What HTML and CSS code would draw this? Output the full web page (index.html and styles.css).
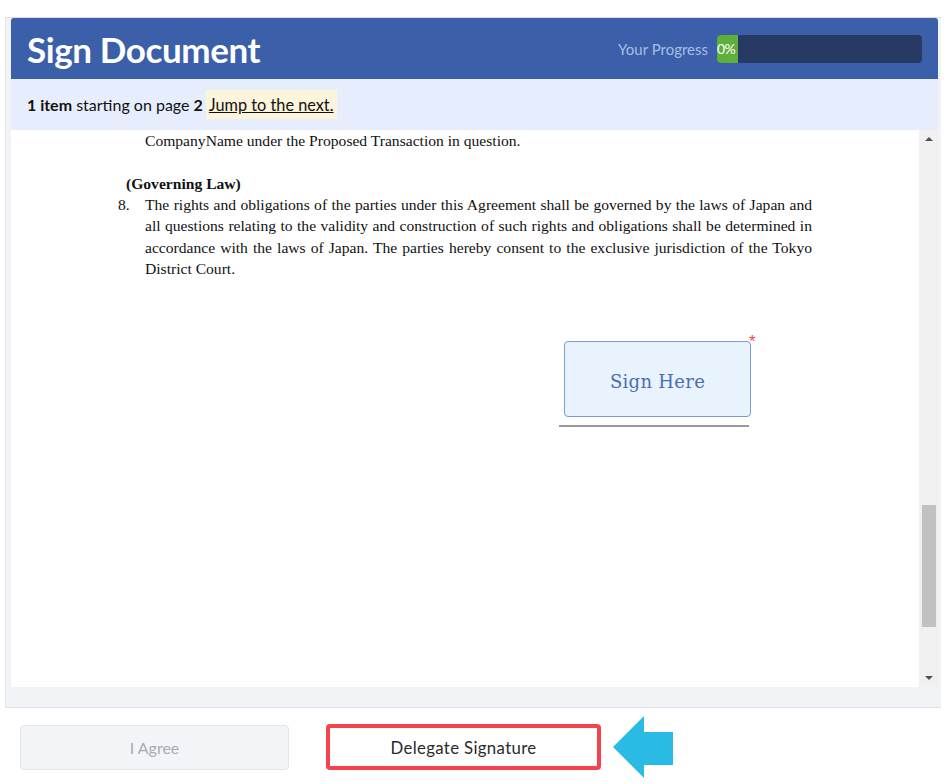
FILE: index.html
```html
<!DOCTYPE html>
<html lang="en">
<head>
    <meta charset="UTF-8">
    <title>Sign Document</title>
    <link rel="stylesheet" href="styles.css">
</head>
<body>
    <div class="signer">
        <div class="panel">
            <!-- Header -->
            <div class="header">
                <h1>Sign Document</h1>
                <div class="progress">
                    <span class="progress-label">Your Progress</span>
                    <div class="progress-track">
                        <div class="progress-fill">0%</div>
                    </div>
                </div>
            </div>

            <!-- Item notice -->
            <div class="notice">
                <span><b>1 item</b> starting on page <b>2</b></span>
                <a href="#" class="jump">Jump to the next.</a>
            </div>

            <!-- Document viewer -->
            <div class="viewer">
                <div class="page">
                    <p class="line indent">CompanyName under the Proposed Transaction in question.</p>
                    <p class="clause-title">(Governing Law)</p>
                    <div class="clause">
                        <span class="num">8.</span>
                        <p>The rights and obligations of the parties under this Agreement shall be governed by the laws of Japan and all questions relating to the validity and construction of such rights and obligations shall be determined in accordance with the laws of Japan. The parties hereby consent to the exclusive jurisdiction of the Tokyo District Court.</p>
                    </div>
                    <div class="sign-area">
                        <div class="sign-box">
                            Sign Here
                            <span class="required">*</span>
                        </div>
                        <div class="sign-line"></div>
                    </div>
                </div>
                <div class="scrollbar">
                    <span class="arrow up"></span>
                    <div class="thumb"></div>
                    <span class="arrow down"></span>
                </div>
            </div>
        </div>
    </div>

    <!-- Actions -->
    <div class="actions">
        <button type="button" class="btn agree" disabled>I Agree</button>
        <button type="button" class="btn delegate">Delegate Signature</button>
        <svg class="pointer" width="62" height="62" viewBox="0 0 62 62">
            <polygon points="0,31 31,0 31,16 60,16 60,49 31,49 31,62" fill="#29bbe3"/>
        </svg>
    </div>
</body>
</html>
```

FILE: styles.css
```css
* {
    margin: 0;
    padding: 0;
    box-sizing: border-box;
}

body {
    font-family: 'Lato', 'Noto Sans', sans-serif;
    background: #ffffff;
    color: #222;
    width: 948px;
    height: 784px;
    overflow: hidden;
}

.signer {
    margin: 17px 7px 0 5px;
    background: #f2f3f7;
    border-top: 1px solid #d9dce4;
    border-left: 1px solid #e4e6ec;
    border-bottom: 1px solid #dcdfe8;
    padding: 0 3px 20px 5px;
}

.header {
    height: 61px;
    background: #3b5fa8;
    border-radius: 3px 3px 0 0;
    display: flex;
    align-items: center;
    justify-content: space-between;
    padding: 0 16px 0 16px;
}

.header h1 {
    color: #ffffff;
    font-size: 35px;
    font-weight: 700;
    letter-spacing: -0.4px;
}

.progress {
    display: flex;
    align-items: center;
    gap: 9px;
}

.progress-label {
    color: #a9bde6;
    font-size: 15px;
}

.progress-track {
    width: 205px;
    height: 28px;
    background: #263a63;
    border-radius: 4px;
    overflow: hidden;
}

.progress-fill {
    width: 21px;
    height: 100%;
    background: #5eaf3c;
    color: #ffffff;
    font-size: 14px;
    line-height: 28px;
    letter-spacing: -0.5px;
}

.notice {
    height: 51px;
    background: #e6edfc;
    display: flex;
    align-items: center;
    gap: 3px;
    padding-left: 16px;
    font-size: 16px;
    color: #111;
}

.notice b {
    font-weight: 700;
}

.jump {
    color: #111;
    background: #fdf4dc;
    padding: 5px 3px;
    font-size: 16.3px;
    text-decoration: underline;
}

.viewer {
    height: 557px;
    background: #ffffff;
    display: flex;
}

.page {
    flex: 1;
    font-family: 'Liberation Serif', serif;
    font-size: 15.6px;
    color: #111;
    padding: 2px 0 0 107px;
}

.indent {
    padding-left: 27px;
}

.clause-title {
    font-weight: 700;
    margin: 24px 0 0 8px;
    line-height: 20px;
}

.clause {
    display: flex;
    width: 694px;
    line-height: 21.4px;
}

.clause .num {
    width: 27px;
}

.clause p {
    flex: 1;
    text-align: justify;
}

.sign-area {
    margin: 61px 0 0 441px;
    width: 190px;
}

.sign-box {
    position: relative;
    margin-left: 5px;
    width: 187px;
    height: 76px;
    padding-top: 5px;
    background: #e8f3fe;
    border: 1px solid #7b9bd3;
    border-radius: 4px;
    display: flex;
    align-items: center;
    justify-content: center;
    font-family: 'DejaVu Serif', serif;
    font-size: 18px;
    letter-spacing: 0.3px;
    color: #4a6db5;
}

.required {
    position: absolute;
    top: -10px;
    right: -6px;
    color: #f04848;
    font-family: 'Liberation Sans', sans-serif;
    font-size: 17px;
}

.sign-line {
    margin-top: 8px;
    height: 2px;
    background: #9a9a9a;
}

.scrollbar {
    width: 19px;
    background: #f0f0f0;
    display: flex;
    flex-direction: column;
    align-items: center;
    padding: 7px 0;
}

.thumb {
    width: 14px;
    height: 122px;
    background: #c1c1c1;
    margin: auto 0 49px;
}

.arrow {
    width: 0;
    height: 0;
    border-left: 4px solid transparent;
    border-right: 4px solid transparent;
}

.arrow.up {
    border-bottom: 4px solid #505050;
}

.arrow.down {
    border-top: 4px solid #505050;
}

.actions {
    display: flex;
    align-items: center;
    padding: 8px 0 0 20px;
}

.btn {
    height: 45px;
    font-family: 'Lato', 'Noto Sans', sans-serif;
    font-size: 16px;
    border-radius: 4px;
}

.agree {
    width: 269px;
    background: #f3f4f7;
    border: 1px solid #e3e5ea;
    color: #a8abb4;
}

.delegate {
    width: 275px;
    height: 46px;
    margin-left: 37px;
    background: #ffffff;
    border: 4px solid #f5424c;
    color: #2a2a2a;
    font-size: 16.8px;
    letter-spacing: 0.35px;
}

.pointer {
    margin-left: 12px;
}
```
